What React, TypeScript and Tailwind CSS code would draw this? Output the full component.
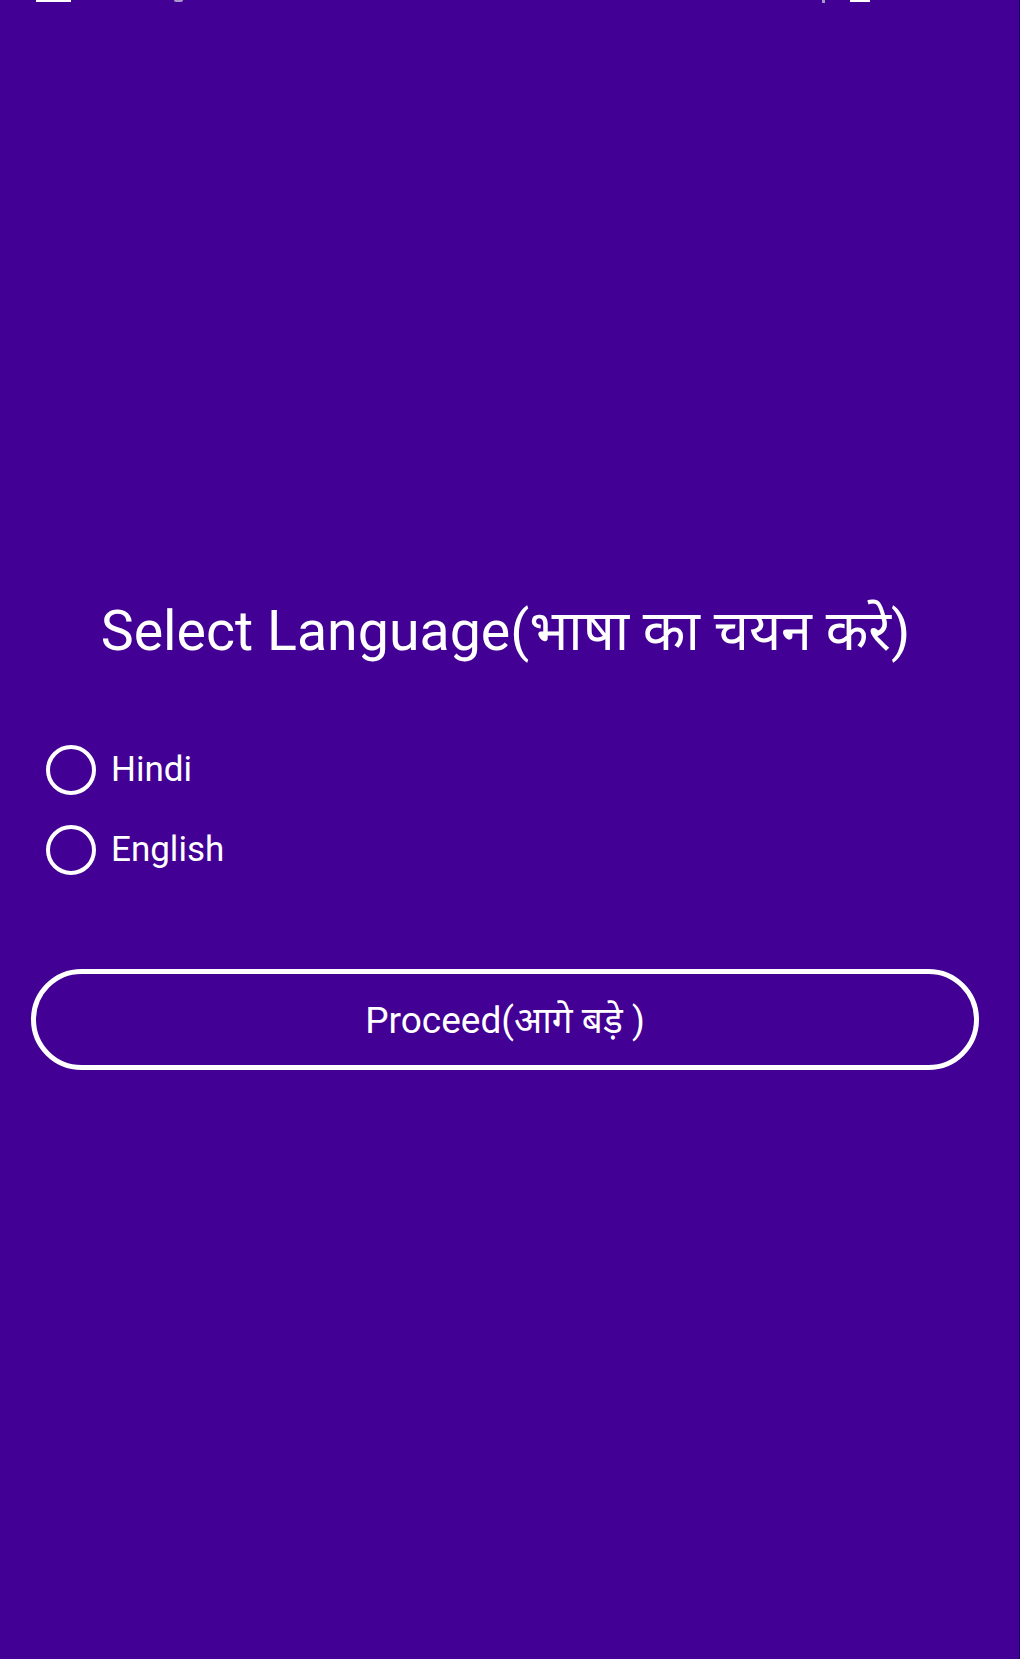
import React from "react";

function Radio({ label }: { label: string }) {
  return (
    <div className="flex items-center h-[50px]">
      <div className="w-[50px] h-[50px] rounded-full border-[4px] border-white box-border" />
      <span className="ml-[15px] text-[35px] leading-[50px] text-white">{label}</span>
    </div>
  );
}

export default function App() {
  return (
    <div
      className="relative w-[1020px] h-[1659px] bg-[#430094] overflow-hidden border-r border-[#1c0070] box-border"
      style={{ fontFamily: 'Roboto, "Noto Sans", "Noto Sans Devanagari", sans-serif' }}
    >
      {/* cut-off status bar bits */}
      <div className="absolute left-[36px] top-0 w-[35px] h-[2px] bg-white" />
      <div className="absolute left-[174px] top-0 w-[9px] h-[2px] rounded-b-full bg-[#a898cc]" />
      <div className="absolute left-[822px] top-0 w-[3px] h-[3px] bg-[#a898cc]" />
      <div className="absolute left-[850px] top-0 w-[20px] h-[2px] bg-white" />

      <div className="flex flex-col pt-[600px]">
        <h1 className="text-center text-white text-[55.5px] leading-[64px] font-normal pr-[8px]">
          Select Language(भाषा का चयन करे)
        </h1>
        <div className="flex flex-col gap-[30px] pl-[46px] mt-[81px]">
          <Radio label="Hindi" />
          <Radio label="English" />
        </div>
        <div className="pl-[31px] mt-[94px] pr-[40px]">
          <button className="w-full h-[101px] rounded-full border-[5px] border-white flex items-center justify-center text-white text-[37px]">
            <span className="mt-[3px]">Proceed(आगे बड़े )</span>
          </button>
        </div>
      </div>
    </div>
  );
}
